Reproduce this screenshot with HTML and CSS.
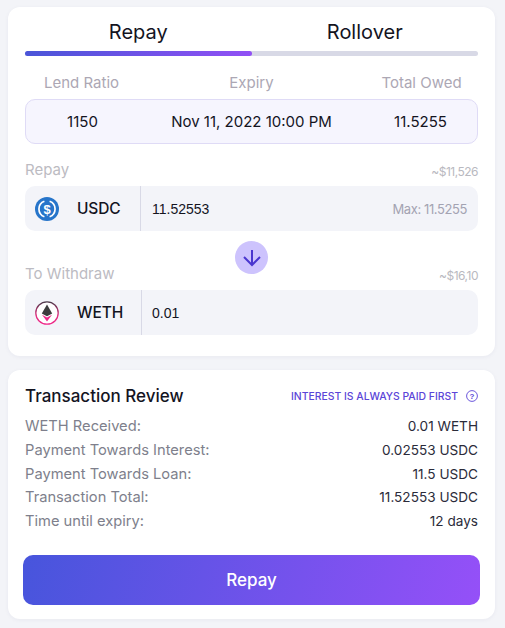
FILE: index.html
```html
<!DOCTYPE html>
<html lang="en">
<head>
    <meta charset="UTF-8">
    <title>Repay</title>
    <link rel="stylesheet" href="styles.css">
</head>
<body>
    <div class="card position-card">
        <div class="tabs">
            <div class="tab">Repay</div>
            <div class="tab">Rollover</div>
        </div>
        <div class="tab-bar"><div class="tab-bar-fill"></div></div>

        <div class="stat-labels">
            <span>Lend Ratio</span>
            <span>Expiry</span>
            <span>Total Owed</span>
        </div>
        <div class="stat-values">
            <span>1150</span>
            <span>Nov 11, 2022 10:00 PM</span>
            <span>11.5255</span>
        </div>

        <div class="field-head repay-head">
            <span class="field-label">Repay</span>
            <span class="field-usd">~$11,526</span>
        </div>
        <div class="field">
            <div class="token">
                <svg class="token-icon" viewBox="0 0 24 24">
                    <circle cx="12" cy="12" r="12" fill="#2775ca"/>
                    <path d="M9.4 4.2a8.3 8.3 0 0 0 0 15.6M14.6 4.2a8.3 8.3 0 0 1 0 15.6" fill="none" stroke="#fff" stroke-width="1.7"/>
                    <text x="12" y="16.6" text-anchor="middle" class="usdc-sign">$</text>
                </svg>
                <span class="token-name">USDC</span>
            </div>
            <input class="amount" type="text" value="11.52553">
            <span class="max">Max: 11.5255</span>
        </div>

        <div class="swap-arrow">
            <div class="arrow-circle">
                <svg viewBox="0 0 20 20" width="20" height="20">
                    <path d="M10 2v15M2 9 10 17l8-8" fill="none" stroke="#4a36cf" stroke-width="2"/>
                </svg>
            </div>
        </div>

        <div class="field-head">
            <span class="field-label">To Withdraw</span>
            <span class="field-usd">~$16,10</span>
        </div>
        <div class="field weth-field">
            <div class="token">
                <svg class="token-icon" viewBox="0 0 24 24">
                    <defs>
                        <linearGradient id="wethRing" x1="0" y1="0" x2="0" y2="1">
                            <stop offset="0" stop-color="#4a3a4a"/>
                            <stop offset="0.6" stop-color="#e0307f"/>
                            <stop offset="1" stop-color="#f0278a"/>
                        </linearGradient>
                    </defs>
                    <circle cx="12" cy="12" r="11.2" fill="#fff" stroke="url(#wethRing)" stroke-width="1.3"/>
                    <path d="M12 3.6 6.8 12.4 12 15.2 17.2 12.4z" fill="#3c3c3d"/>
                    <path d="M7 13.8 12 20.4 17 13.8 12 16.6z" fill="#ee2a8a"/>
                </svg>
                <span class="token-name">WETH</span>
            </div>
            <input class="amount" type="text" value="0.01">
        </div>
    </div>

    <div class="card review-card">
        <div class="review-head">
            <h2>Transaction Review</h2>
            <div class="review-note">
                <span>INTEREST IS ALWAYS PAID FIRST</span>
                <svg viewBox="0 0 12 12" width="12" height="12">
                    <circle cx="6" cy="6" r="5.4" fill="none" stroke="#5b45d8" stroke-width="0.9"/>
                    <text x="6" y="8.5" text-anchor="middle" class="help-sign">?</text>
                </svg>
            </div>
        </div>
        <div class="review-rows">
            <div class="review-row"><span>WETH Received:</span><span class="val">0.01 WETH</span></div>
            <div class="review-row"><span>Payment Towards Interest:</span><span class="val">0.02553 USDC</span></div>
            <div class="review-row"><span>Payment Towards Loan:</span><span class="val">11.5 USDC</span></div>
            <div class="review-row"><span>Transaction Total:</span><span class="val">11.52553 USDC</span></div>
            <div class="review-row"><span>Time until expiry:</span><span class="val">12 days</span></div>
        </div>
        <button class="submit">Repay</button>
    </div>
</body>
</html>
```

FILE: styles.css
```css
* {
    box-sizing: border-box;
}

body {
    font-family: Inter, "Open Sans", sans-serif;
    background-color: #f3f4f8;
    margin: 0;
    padding: 7px 10px 9px 8px;
    color: #14141f;
}

.card {
    background-color: white;
    border-radius: 12px;
    box-shadow: 0 1px 4px rgba(40, 40, 90, 0.05);
}

.position-card {
    height: 349px;
    padding: 0 17px;
}

.tabs {
    display: flex;
    height: 44px;
    padding-top: 12px;
}

.tab {
    flex: 1;
    text-align: center;
    font-size: 20px;
    line-height: 27px;
}

.tab-bar {
    height: 5px;
    background-color: #d8d9e6;
    border-radius: 3px;
}

.tab-bar-fill {
    width: 50%;
    height: 100%;
    border-radius: 3px;
    background: linear-gradient(90deg, #4a55d8, #9150f5);
}

.stat-labels,
.stat-values {
    display: grid;
    grid-template-columns: 113px 1fr 113px;
    text-align: center;
}

.stat-labels {
    margin-top: 17px;
    height: 26px;
    font-size: 15px;
    line-height: 20px;
    color: #aca7b4;
}

.stat-values {
    height: 45px;
    align-items: center;
    font-size: 15px;
    background-color: #f6f5fe;
    border: 1px solid #dfdbf6;
    border-radius: 10px;
}

.field-head {
    display: flex;
    justify-content: space-between;
    align-items: flex-end;
    height: 20px;
    margin-bottom: 6px;
}

.repay-head {
    margin-top: 16px;
}

.field-label {
    font-size: 15px;
    line-height: 20px;
    color: #bcbbc2;
}

.field-usd {
    font-size: 12px;
    line-height: 16px;
    letter-spacing: -0.5px;
    color: #b9b9c0;
}

.field {
    display: flex;
    align-items: center;
    height: 45px;
    background-color: #f3f4f9;
    border-radius: 10px;
    padding-right: 11px;
}

.token {
    display: flex;
    align-items: center;
    width: 116px;
    height: 100%;
    padding-left: 10px;
    border-right: 1px solid #d8d9e6;
    flex-shrink: 0;
}

.weth-field .token {
    width: 117px;
}

.weth-field .amount {
    padding-left: 10px;
}

.token-icon {
    width: 24px;
    height: 24px;
    margin-right: 18px;
}

.usdc-sign {
    font-family: "Liberation Sans", sans-serif;
    font-size: 13px;
    font-weight: bold;
    fill: white;
}

.token-name {
    font-size: 15.5px;
    font-weight: 500;
    letter-spacing: -0.1px;
}

.amount {
    flex: 1;
    min-width: 0;
    border: none;
    outline: none;
    background: none;
    padding: 0 0 0 11px;
    font-family: "Liberation Sans", sans-serif;
    font-size: 14px;
    color: #14141f;
}

.max {
    font-size: 13px;
    letter-spacing: -0.4px;
    color: #a3a3b2;
}

.swap-arrow {
    display: flex;
    justify-content: center;
    margin: 10px 0 -10px;
}

.arrow-circle {
    display: flex;
    align-items: center;
    justify-content: center;
    width: 33px;
    height: 33px;
    border-radius: 50%;
    background-color: #cdc3fd;
}

.review-card {
    height: 249px;
    margin-top: 14px;
    padding: 15px 15px 14px;
}

.review-head {
    display: flex;
    justify-content: space-between;
    align-items: center;
    padding: 0 2px;
    height: 22px;
}

h2 {
    margin: 0;
    font-size: 17px;
    font-weight: 500;
}

.review-note {
    display: flex;
    align-items: center;
    gap: 8px;
    font-size: 10.4px;
    font-weight: 500;
    color: #5b45d8;
}

.review-rows {
    margin-top: 7px;
    padding: 0 2px;
}

.review-row {
    display: flex;
    justify-content: space-between;
    height: 23.75px;
    font-size: 14.7px;
    line-height: 24px;
    color: #7e7f8c;
}

.review-row .val {
    font-size: 13.6px;
    color: #2b2b3a;
}

.help-sign {
    font-family: "Liberation Sans", sans-serif;
    font-size: 8px;
    font-weight: bold;
    fill: #5b45d8;
}

.submit {
    display: block;
    width: 100%;
    height: 50px;
    margin-top: 22px;
    border: none;
    border-radius: 10px;
    font-family: Inter, "Open Sans", sans-serif;
    font-size: 17px;
    font-weight: 500;
    color: white;
    background: linear-gradient(105deg, #4755dc, #9550f8);
    cursor: pointer;
}
```
